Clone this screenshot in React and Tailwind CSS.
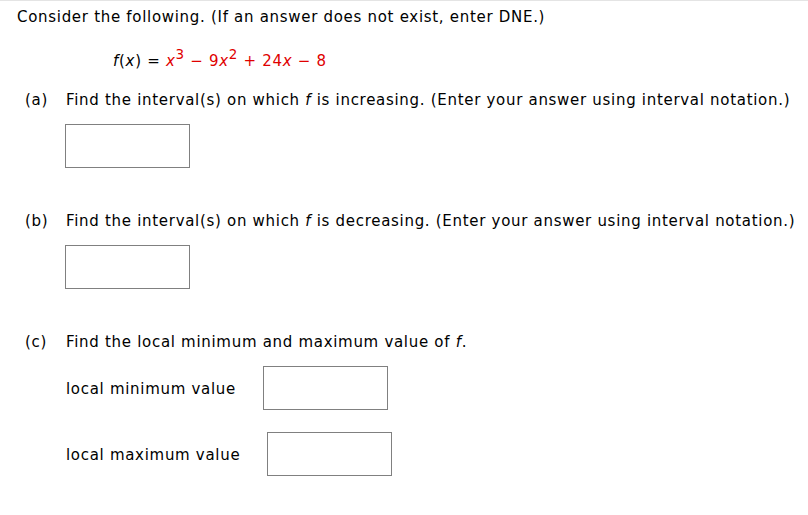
import React from 'react';

const AnswerBox = () => (
    <div className="w-[125px] h-[44px] border border-[#808080] bg-white shrink-0" />
);

const Part = ({ label, children }) => (
    <div className="flex pl-[25px]">
        <span className="w-[41px] shrink-0">{label}</span>
        <span>{children}</span>
    </div>
);

const App = () => {
    return (
        <div className="h-[515px] bg-white border-t border-[#e4e4e4] font-['DejaVu_Sans',Verdana,sans-serif] text-[15px] leading-[18px] tracking-[0.7px] text-black">
            <p className="pl-[17px] pt-[7px]">Consider the following. (If an answer does not exist, enter DNE.)</p>

            <p className="pl-[113px] mt-[26px] whitespace-pre">
                <i>f</i>(<i>x</i>) = <span className="text-[#e00000]"><i>x</i><sup className="text-[13.5px] -top-[7px]">3</sup> − 9<i>x</i><sup className="text-[13.5px] -top-[7px]">2</sup> + 24<i>x</i> − 8</span>
            </p>

            <div className="mt-[21px]">
                <Part label="(a)">Find the interval(s) on which <i>f</i> is increasing. (Enter your answer using interval notation.)</Part>
            </div>
            <div className="pl-[65px] mt-[15px]">
                <AnswerBox />
            </div>

            <div className="mt-[44px]">
                <Part label="(b)">Find the interval(s) on which <i>f</i> is decreasing. (Enter your answer using interval notation.)</Part>
            </div>
            <div className="pl-[65px] mt-[15px]">
                <AnswerBox />
            </div>

            <div className="mt-[44px]">
                <Part label="(c)">Find the local minimum and maximum value of <i>f</i>.</Part>
            </div>
            <div className="pl-[66px] mt-[15px] flex items-center">
                <span className="w-[197px] pt-[2px]">local minimum value</span>
                <AnswerBox />
            </div>
            <div className="pl-[66px] mt-[22px] flex items-center">
                <span className="w-[201px] pt-[2px]">local maximum value</span>
                <AnswerBox />
            </div>
        </div>
    );
};

export default App;
